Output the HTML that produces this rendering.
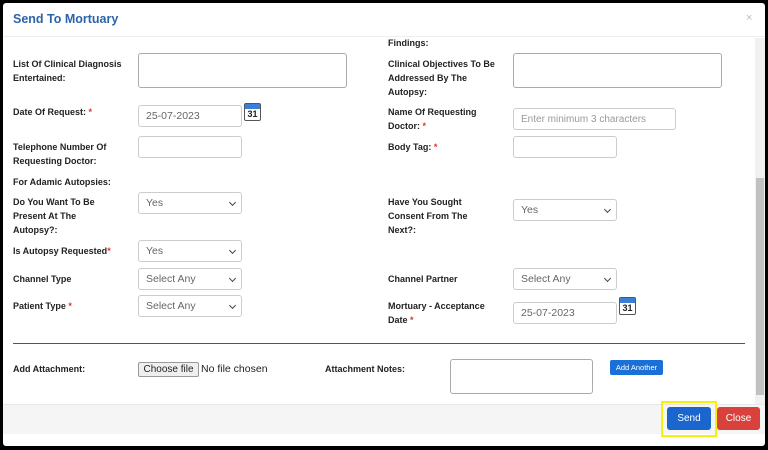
<!DOCTYPE html>
<html><head><meta charset="utf-8"><style>
*{box-sizing:border-box;margin:0;padding:0}
body{width:768px;height:450px;background:#000;position:relative;overflow:hidden;font-family:"Liberation Sans",sans-serif}
.m{position:absolute;left:3px;top:3px;width:762px;height:443px;background:#fff;border-radius:3px;overflow:hidden}
.a{position:absolute}
.l{position:absolute;font-size:9px;font-weight:bold;color:#222;line-height:14px}
.r{color:#d33}
.i{position:absolute;border:1px solid #ccc;border-radius:3px;background:#fff;font-size:10.5px;color:#666;padding-left:7px;height:22px;display:flex;align-items:center}
.s::after{content:"";position:absolute;right:6px;top:7px;width:4px;height:4px;border-right:1.3px solid #444;border-bottom:1.3px solid #444;transform:rotate(45deg)}
.t{position:absolute;border:1px solid #aaa;border-radius:3px;background:#fff}
.cal{position:absolute;width:17px;height:18px;border:1px solid #555;border-radius:2px;background:#fff;font-size:9px;font-weight:bold;text-align:center;line-height:11px;padding-top:5px;color:#222}
.cal::before{content:"";position:absolute;left:0;top:0;right:0;height:5px;background:#3a7fd5}
</style></head><body>
<div class="m">
<div class="a" style="left:10px;top:9px;font-size:12.5px;font-weight:bold;color:#2d64a8">Send To Mortuary</div>
<div class="a" style="left:743px;top:9px;font-size:11px;color:#bbb">×</div>
<div class="a" style="left:0;top:33px;width:762px;height:1px;background:#eee"></div>
<div class="a" style="left:752px;top:35px;width:10px;height:366px;background:#f1f1f1"></div>
<div class="a" style="left:753px;top:175px;width:8px;height:217px;background:#c1c1c1"></div>

<div class="l" style="left:10px;top:54px">List Of Clinical Diagnosis<br>Entertained:</div>
<div class="t" style="left:135px;top:50px;width:209px;height:35px"></div>
<div class="l" style="left:385px;top:33px">Findings:</div>
<div class="l" style="left:385px;top:54px">Clinical Objectives To Be<br>Addressed By The<br>Autopsy:</div>
<div class="t" style="left:510px;top:50px;width:209px;height:35px"></div>

<div class="l" style="left:10px;top:102px">Date Of Request: <span class="r">*</span></div>
<div class="i" style="left:135px;top:102px;width:104px">25-07-2023</div>
<div class="cal" style="left:241px;top:100px">31</div>
<div class="l" style="left:385px;top:102px">Name Of Requesting<br>Doctor: <span class="r">*</span></div>
<div class="i" style="left:510px;top:105px;width:163px;color:#999;white-space:nowrap;font-size:10px">Enter minimum 3 characters</div>

<div class="l" style="left:10px;top:137px">Telephone Number Of<br>Requesting Doctor:</div>
<div class="i" style="left:135px;top:133px;width:104px"></div>
<div class="l" style="left:385px;top:137px">Body Tag: <span class="r">*</span></div>
<div class="i" style="left:510px;top:133px;width:104px"></div>

<div class="l" style="left:10px;top:172px">For Adamic Autopsies:</div>
<div class="l" style="left:10px;top:192px">Do You Want To Be<br>Present At The<br>Autopsy?:</div>
<div class="i s" style="left:135px;top:189px;width:104px">Yes</div>
<div class="l" style="left:385px;top:192px">Have You Sought<br>Consent From The<br>Next?:</div>
<div class="i s" style="left:510px;top:196px;width:104px">Yes</div>

<div class="l" style="left:10px;top:241px">Is Autopsy Requested<span class="r">*</span></div>
<div class="i s" style="left:135px;top:237px;width:104px">Yes</div>

<div class="l" style="left:10px;top:269px">Channel Type</div>
<div class="i s" style="left:135px;top:265px;width:104px">Select Any</div>
<div class="l" style="left:385px;top:269px">Channel Partner</div>
<div class="i s" style="left:510px;top:265px;width:104px">Select Any</div>

<div class="l" style="left:10px;top:296px">Patient Type <span class="r">*</span></div>
<div class="i s" style="left:135px;top:292px;width:104px">Select Any</div>
<div class="l" style="left:385px;top:296px">Mortuary - Acceptance<br>Date <span class="r">*</span></div>
<div class="i" style="left:510px;top:299px;width:104px">25-07-2023</div>
<div class="cal" style="left:616px;top:294px">31</div>

<div class="a" style="left:10px;top:340px;width:732px;height:1px;background:#555"></div>

<div class="l" style="left:10px;top:359px">Add Attachment:</div>
<div class="a" style="left:135px;top:359px;width:61px;height:15px;background:#efefef;border:1px solid #999;border-radius:2px;font-size:10px;line-height:13px;text-align:center;color:#222">Choose file</div>
<div class="a" style="left:198px;top:359px;font-size:10.5px;line-height:15px;color:#222">No file chosen</div>
<div class="l" style="left:322px;top:359px">Attachment Notes:</div>
<div class="t" style="left:447px;top:356px;width:143px;height:35px"></div>
<div class="a" style="left:607px;top:357px;width:53px;height:15px;background:#1b6fd8;border-radius:2px;font-size:7.5px;color:#fff;text-align:center;line-height:15px">Add Another</div>

<div class="a" style="left:0;top:401px;width:762px;height:30px;background:#f5f5f5;border-top:1px solid #e8e8e8"></div>
<div class="a" style="left:658px;top:398px;width:56px;height:36px;border:2px solid #f4f20a"></div>
<div class="a" style="left:664px;top:404px;width:44px;height:23px;background:#1a66cc;border-radius:3px;color:#fff;font-size:10px;text-align:center;line-height:23px">Send</div>
<div class="a" style="left:714px;top:404px;width:43px;height:23px;background:#d9413c;border-radius:3px;color:#fff;font-size:10px;text-align:center;line-height:23px">Close</div>
</div>
</body></html>
